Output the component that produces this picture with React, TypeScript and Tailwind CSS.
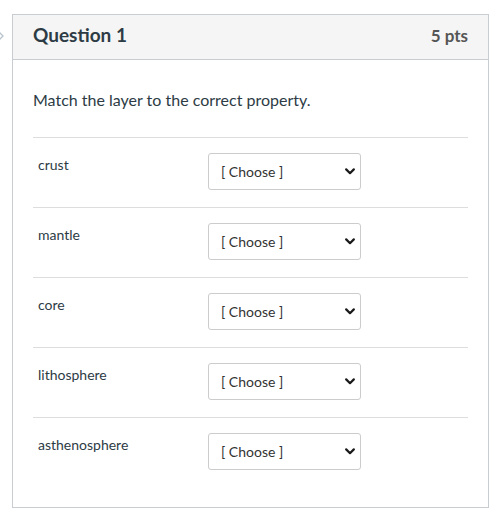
import React from 'react';

const LAYERS = ['crust', 'mantle', 'core', 'lithosphere', 'asthenosphere'];

function Chevron() {
  return (
    <svg width="10" height="7" viewBox="0 0 10 7" className="pointer-events-none absolute right-[6px] top-[15px]">
      <path d="M1.2 1.4 L5 5.2 L8.8 1.4" fill="none" stroke="#1a1a1a" strokeWidth="2.2" strokeLinecap="round" strokeLinejoin="round" />
    </svg>
  );
}

function MatchRow({ label }: { label: string }) {
  return (
    <div className="flex h-[70px] border-t border-[#dddddd] pt-[15px]">
      <div className="w-[175px] pl-[5px] pt-[2px] text-[14px] leading-[20px] text-[#2d3b45]">{label}</div>
      <div className="relative h-[37px] w-[153px]">
        <select className="h-full w-full appearance-none rounded-[3px] border border-[#cccccc] bg-white pl-[12px] text-[14px] text-[#333333] outline-none">
          <option>[ Choose ]</option>
        </select>
        <Chevron />
      </div>
    </div>
  );
}

export default function App() {
  return (
    <div className="relative min-h-[514px] bg-white pt-[14px] pl-[12px] pr-[10px] font-['Lato','Liberation_Sans',sans-serif]">
      <svg width="8" height="12" viewBox="0 0 8 12" className="absolute left-[-3px] top-[30px]">
        <path d="M1.5 1.5 L6 6 L1.5 10.5" fill="none" stroke="#b9c4cc" strokeWidth="1.3" />
      </svg>
      <div className="h-[494px] w-[477px] border border-[#c7cdd1]">
        <div className="flex h-[45px] items-center justify-between border-b border-[#c7cdd1] bg-[#f5f5f5] pb-[3px] pl-[20px] pr-[20px]">
          <h2 className="text-[19px] font-bold text-[#2d3b45]">Question 1</h2>
          <span className="text-[17px] font-bold text-[#555555]">5 pts</span>
        </div>
        <div className="px-[20px]">
          <p className="pt-[28px] pb-[25px] text-[16px] leading-[24px] text-[#2d3b45]">Match the layer to the correct property.</p>
          {LAYERS.map(l => <MatchRow key={l} label={l} />)}
        </div>
      </div>
    </div>
  );
}
